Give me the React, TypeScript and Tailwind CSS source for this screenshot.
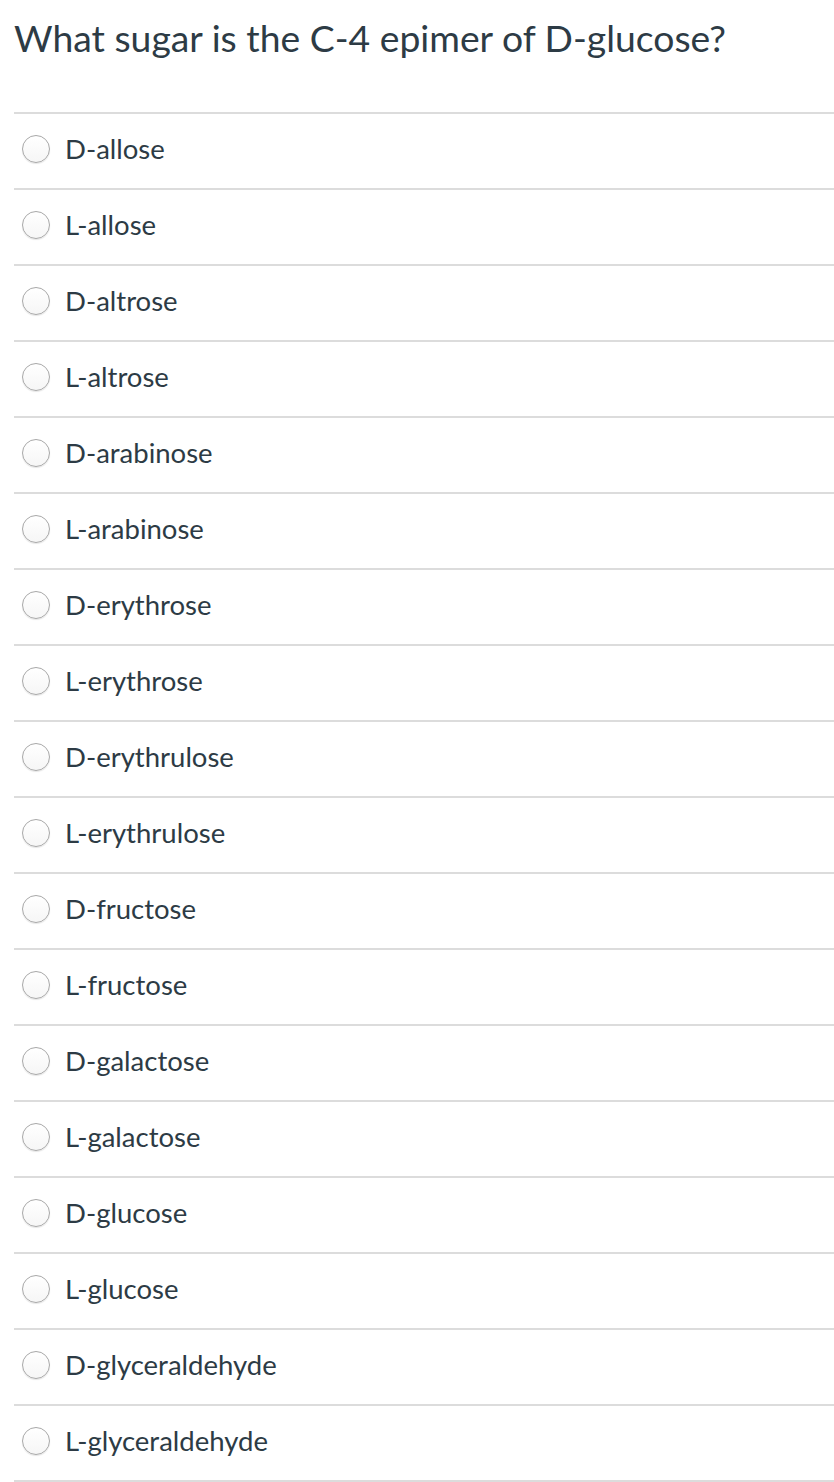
import React from "react";

const options = [
  "D-allose",
  "L-allose",
  "D-altrose",
  "L-altrose",
  "D-arabinose",
  "L-arabinose",
  "D-erythrose",
  "L-erythrose",
  "D-erythrulose",
  "L-erythrulose",
  "D-fructose",
  "L-fructose",
  "D-galactose",
  "L-galactose",
  "D-glucose",
  "L-glucose",
  "D-glyceraldehyde",
  "L-glyceraldehyde",
];

export default function App() {
  return (
    <div
      className="bg-white text-[#2d3b45] w-[834px] h-[1482px] overflow-hidden"
      style={{ fontFamily: "Lato, 'Open Sans', sans-serif" }}
    >
      <h1 className="pl-[14px] pt-[14px] h-[112px] text-[37.3px] leading-[48px] font-normal">
        What sugar is the C-4 epimer of D-glucose?
      </h1>
      <div className="ml-[14px] border-b-2 border-[#dcdcdc]">
        {options.map((o) => (
          <div
            key={o}
            className="h-[76px] border-t-2 border-[#dcdcdc] flex items-center pb-[5px]"
          >
            <span className="ml-[8px] w-[28px] h-[28px] rounded-full border border-[#a8a8a8] bg-gradient-to-b from-white to-[#f6f6f6] shadow-[0_1px_1px_rgba(0,0,0,0.1)]" />
            <span className="ml-[15px] text-[27.5px] leading-none">{o}</span>
          </div>
        ))}
      </div>
    </div>
  );
}
